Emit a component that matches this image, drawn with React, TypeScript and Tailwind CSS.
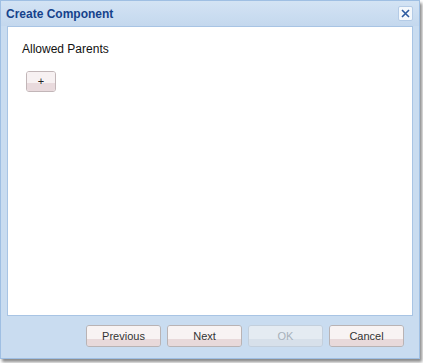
import React from "react";

function Btn({ label, disabled }: { label: string; disabled?: boolean }) {
  return (
    <div
      className={
        "w-[75px] h-[22px] rounded-[3px] border flex flex-col overflow-hidden relative " +
        (disabled ? "border-[#c3cfdc]" : "border-[#b9b3b4]")
      }
    >
      <div className={"h-[13px] " + (disabled ? "bg-[#e4ebf2]" : "bg-[#f8f3f3]")} />
      <div className={"flex-1 " + (disabled ? "bg-[#d7e0ea]" : "bg-[#e8d9da]")} />
      <div
        className={
          "absolute inset-0 flex items-center justify-center text-[11px] " +
          (disabled ? "text-[#a7b1bb]" : "text-[#333]")
        }
        style={{ fontFamily: "'Liberation Sans', Arial, sans-serif" }}
      >
        {label}
      </div>
    </div>
  );
}

export default function App() {
  return (
    <div className="w-[423px] h-[363px] bg-white" style={{ fontFamily: "'Liberation Sans', Arial, sans-serif" }}>
      <div className="w-[420px] h-[359px] bg-[#c9dcf0] border border-[#9fbfe3] flex flex-col shadow-[2px_3px_3px_#8a8a8a]">
        <div className="h-[25px] flex items-center justify-between pl-[5px] pr-[6px] bg-gradient-to-b from-[#d3e3f4] to-[#c4d8ee]">
          <span className="text-[12px] font-bold text-[#15428b]">Create Component</span>
          <div className="w-[15px] h-[15px] rounded-[2px] bg-[#f4f8fc] border border-[#b4cbe6] flex items-center justify-center">
            <svg width="11" height="11" viewBox="0 0 11 11">
              <path d="M2 2 L9 9 M9 2 L2 9" stroke="#2b5aa0" strokeWidth="1.6" />
            </svg>
          </div>
        </div>
        <div className="mx-[6px] h-[290px] bg-white border border-[#a8c4e4] pt-[13px] pl-[14px]">
          <div className="text-[12px] text-[#111]">Allowed Parents</div>
          <div className="mt-[13px] ml-[4px] w-[30px] h-[21px] rounded-[3px] border border-[#c2b6b8] flex flex-col overflow-hidden relative">
            <div className="h-[11px] bg-[#f7f1f2]" />
            <div className="flex-1 bg-[#e9dadd]" />
            <div className="absolute inset-0 flex items-center justify-center text-[11px] text-[#222]">+</div>
          </div>
        </div>
        <div className="flex-1 flex items-start justify-end gap-[6px] pr-[15px] pt-[9px]">
          <Btn label="Previous" />
          <Btn label="Next" />
          <Btn label="OK" disabled />
          <Btn label="Cancel" />
        </div>
      </div>
    </div>
  );
}
